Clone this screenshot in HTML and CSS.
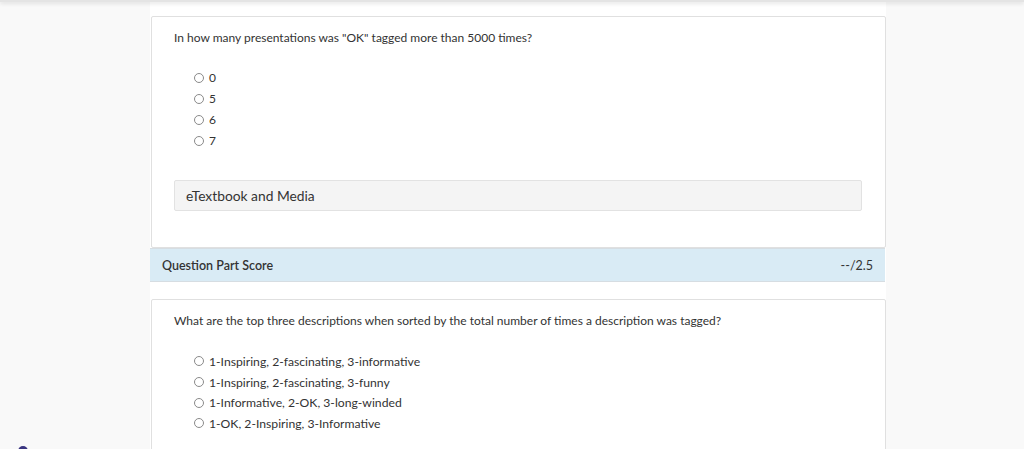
FILE: index.html
```html
<!DOCTYPE html>
<html>
<head>
<meta charset="utf-8">
<link rel="stylesheet" href="styles.css">
</head>
<body>
<div class="topbar"></div>
<main class="column">
  <section class="card q1">
    <p class="question">In how many presentations was "OK" tagged more than 5000 times?</p>
    <ul class="options">
      <li><span class="radio"></span>0</li>
      <li><span class="radio"></span>5</li>
      <li><span class="radio"></span>6</li>
      <li><span class="radio"></span>7</li>
    </ul>
    <div class="media">eTextbook and Media</div>
  </section>
  <div class="score">
    <span class="score-label">Question Part Score</span>
    <span class="score-value">--/2.5</span>
  </div>
  <section class="card q2">
    <p class="question">What are the top three descriptions when sorted by the total number of times a description was tagged?</p>
    <ul class="options">
      <li><span class="radio"></span>1-Inspiring, 2-fascinating, 3-informative</li>
      <li><span class="radio"></span>1-Inspiring, 2-fascinating, 3-funny</li>
      <li><span class="radio"></span>1-Informative, 2-OK, 3-long-winded</li>
      <li><span class="radio"></span>1-OK, 2-Inspiring, 3-Informative</li>
    </ul>
  </section>
</main>
<div class="fab"></div>
</body>
</html>
```

FILE: styles.css
```css
html, body {
  margin: 0;
  padding: 0;
  height: 449px;
  overflow: hidden;
  background: #f9f9f9;
  font-family: Lato, "Open Sans", sans-serif;
  color: #333;
}
.topbar {
  position: fixed;
  top: 0;
  left: 0;
  right: 0;
  height: 2px;
  background: #e4e4e4;
  box-shadow: 0 1px 4px rgba(0,0,0,0.18);
  z-index: 2;
}
.column {
  width: 736px;
  margin-left: 150px;
  background: #fff;
  padding-top: 16px;
  min-height: 500px;
  box-sizing: border-box;
}
.card {
  border: 1px solid #e0e0e0;
  border-radius: 2px;
  margin-left: 1px;
  width: 735px;
  background: #fff;
  padding: 0 22px;
  box-sizing: border-box;
}
.question {
  margin: 0;
  font-size: 12px;
  line-height: 15px;
}
.q1 .question { padding-top: 13px; }
.q2 .question { padding-top: 13px; }
.options {
  list-style: none;
  margin: 0;
  padding: 0 0 0 20px;
}
.q1 .options { margin-top: 22px; }
.q2 .options { margin-top: 23px; padding-bottom: 20px; }
.options li {
  display: flex;
  align-items: center;
  height: 21px;
  font-size: 12px;
}
.q2 .options li { height: 20.7px; font-size: 12.2px; }
.radio {
  width: 8px;
  height: 8px;
  border: 1px solid #8a8a8a;
  border-radius: 50%;
  margin-right: 5px;
  flex: none;
}
.media {
  margin-top: 29px;
  margin-bottom: 36px;
  width: 688px;
  height: 31px;
  box-sizing: border-box;
  background: #f4f4f4;
  border: 1px solid #e2e2e2;
  border-radius: 2px;
  padding-left: 11px;
  display: flex;
  align-items: center;
  font-size: 13.8px;
}
.score {
  display: flex;
  justify-content: space-between;
  align-items: center;
  height: 34px;
  box-sizing: border-box;
  width: 735px;
  background: #d9ebf5;
  border-top: 1px solid #d6dde2;
  border-bottom: 1px solid #d6dde2;
  padding: 0 12px 0 12px;
  margin-bottom: 17px;
  font-size: 12.5px;
}
.score-label { font-weight: 600; }
.fab {
  position: fixed;
  left: 18px;
  top: 446px;
  width: 10px;
  height: 10px;
  border-radius: 50%;
  background: #3a3580;
}
```
